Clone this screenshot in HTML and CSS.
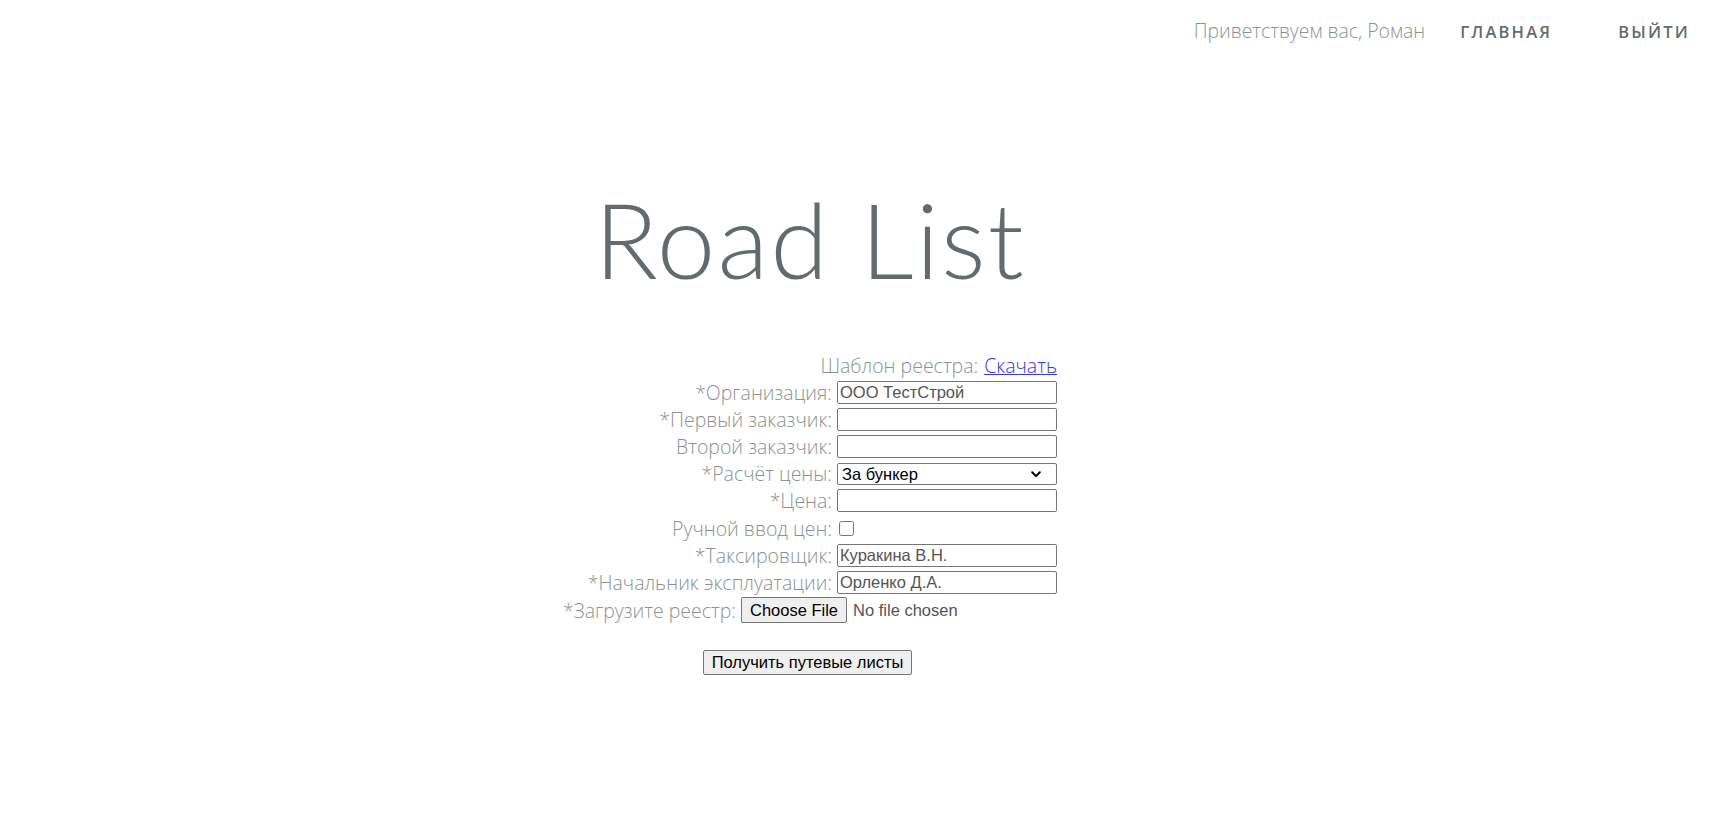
FILE: index.html
```html
<!DOCTYPE html>
<html lang="ru">
<head>
    <meta charset="utf-8">
    <title>Road List</title>
    <link rel="stylesheet" href="styles.css">
</head>
<body>
    <!-- Top navigation: greeting and links -->
    <div class="top-right">
        <span class="greeting">Приветствуем вас, Роман</span>
        <a class="nav-link" href="#">Главная</a>
        <a class="nav-link" href="#">Выйти</a>
    </div>

    <div class="flex-center">
        <div class="content">
            <div class="title">Road List</div>

            <form class="road-form" onsubmit="return false;">
                <div class="row row-text">
                    <span>Шаблон реестра:</span>
                    <a class="download" href="#">Скачать</a>
                </div>
                <div class="row">
                    <label for="org">*Организация:</label>
                    <input id="org" type="text" value="ООО ТестСтрой">
                </div>
                <div class="row">
                    <label for="customer1">*Первый заказчик:</label>
                    <input id="customer1" type="text">
                </div>
                <div class="row">
                    <label for="customer2">Второй заказчик:</label>
                    <input id="customer2" type="text">
                </div>
                <div class="row">
                    <label for="calc">*Расчёт цены:</label>
                    <span class="select-wrap">
                        <select id="calc">
                            <option>За бункер</option>
                            <option>За тонну</option>
                        </select>
                        <svg class="select-arrow" width="10" height="7" viewBox="0 0 10 7">
                            <path d="M1.2 1.3 L5 5.1 L8.8 1.3" fill="none" stroke="#000" stroke-width="2" stroke-linecap="round" stroke-linejoin="round"/>
                        </svg>
                    </span>
                </div>
                <div class="row">
                    <label for="price">*Цена:</label>
                    <input id="price" type="text">
                </div>
                <div class="row row-check">
                    <label for="manual">Ручной ввод цен:</label>
                    <span class="check-box"><input id="manual" type="checkbox"></span>
                </div>
                <div class="row">
                    <label for="taxer">*Таксировщик:</label>
                    <input id="taxer" type="text" value="Куракина В.Н.">
                </div>
                <div class="row">
                    <label for="chief">*Начальник эксплуатации:</label>
                    <input id="chief" type="text" value="Орленко Д.А.">
                </div>
                <div class="row row-file">
                    <label for="registry">*Загрузите реестр:</label>
                    <input id="registry" type="file">
                </div>
                <div class="submit-row">
                    <button type="submit">Получить путевые листы</button>
                </div>
            </form>
        </div>
    </div>
</body>
</html>
```

FILE: styles.css
```css
/* Base page */
html, body {
    background-color: #fff;
    color: #636b6f;
    font-family: "Open Sans", "Noto Sans", sans-serif;
    font-weight: 300;
    margin: 0;
}

/* Top right navigation */
.top-right {
    display: flex;
    justify-content: flex-end;
    align-items: baseline;
    height: 56px;
    padding-top: 17px;
    padding-right: 1px;
    box-sizing: border-box;
}

.greeting {
    font-size: 19.4px;
    color: #8c9194;
    margin-right: 4px;
}

.nav-link {
    color: #636b6f;
    padding: 0 31px;
    font-size: 16.5px;
    font-weight: 600;
    letter-spacing: 2.2px;
    text-decoration: none;
    text-transform: uppercase;
}

.nav-link + .nav-link {
    margin-left: 4px;
}

/* Centered content column */
.flex-center {
    display: flex;
    justify-content: center;
    padding-right: 102px;
}

.content {
    text-align: center;
}

.title {
    font-family: "Lato", "Open Sans", sans-serif;
    font-weight: 300;
    font-size: 105px;
    line-height: 105px;
    letter-spacing: 2px;
    margin-top: 130px;
    margin-bottom: 61px;
}

/* Form rows, right aligned like the original */
.road-form {
    display: flex;
    flex-direction: column;
    align-items: flex-end;
}

.row {
    display: flex;
    align-items: center;
    justify-content: flex-end;
    gap: 5px;
    height: 27px;
    font-size: 19.5px;
    color: #8c9194;
}

.row-text {
    gap: 6px;
}

.row-check {
    height: 28px;
}

.download {
    color: #3434ee;
}

input[type="text"],
select {
    width: 220px;
    height: 23px;
    box-sizing: border-box;
    margin: 0;
    padding: 1px 2px;
    border: 1px solid #767676;
    border-radius: 2px;
    font-family: "Liberation Sans", Arial, sans-serif;
    font-size: 16.5px;
    color: #545454;
}

/* Select with a drawn chevron */
.select-wrap {
    position: relative;
    display: flex;
}

select {
    height: 22px;
    padding: 0 24px 0 4px;
    color: #000;
    background: #fff;
    appearance: none;
}

.select-arrow {
    position: absolute;
    right: 16px;
    top: 8px;
    pointer-events: none;
}

.check-box {
    display: flex;
    width: 220px;
}

input[type="checkbox"] {
    width: 15px;
    height: 15px;
    margin: 0 0 0 2px;
}

input[type="file"] {
    width: 316px;
    margin: 0;
    font-family: "Liberation Sans", Arial, sans-serif;
    font-size: 16.5px;
    color: #545454;
}

input[type="file"]::file-selector-button {
    height: 26px;
    padding: 1px 8px;
    margin-right: 6px;
    font-family: "Liberation Sans", Arial, sans-serif;
    font-size: 16.5px;
    border: 1px solid #767676;
    border-radius: 2px;
    background: #efefef;
    color: #000;
}

.row-file {
    height: 28px;
}

/* Submit button */
.submit-row {
    align-self: center;
    margin-top: 26px;
    margin-right: 5px;
}

button {
    height: 25px;
    padding: 1px 8px;
    font-family: "Liberation Sans", Arial, sans-serif;
    font-size: 16.5px;
    border: 1px solid #767676;
    border-radius: 2px;
    background: #efefef;
    color: #000;
}
```
